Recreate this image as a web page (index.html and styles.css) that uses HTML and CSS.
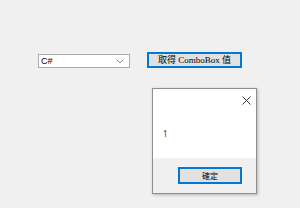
FILE: index.html
```html
<!DOCTYPE html>
<html lang="zh-Hant">
<head>
    <meta charset="UTF-8">
    <title>ComboBox</title>
    <link rel="stylesheet" href="styles.css">
</head>
<body>
    <div class="form">
        <div class="toolbar">
            <div class="combo">
                <span class="combo-text">C#</span>
                <svg class="combo-arrow" width="8" height="5" viewBox="0 0 8 5">
                    <path d="M0.5 0.5 L4 4 L7.5 0.5" fill="none" stroke="#8a8a8a" stroke-width="1"/>
                </svg>
            </div>
            <button class="button">取得 ComboBox 值</button>
        </div>
    </div>

    <div class="dialog">
        <div class="dialog-head">
            <svg class="close" width="9" height="9" viewBox="0 0 9 9">
                <path d="M0.5 0.5 L8.5 8.5 M8.5 0.5 L0.5 8.5" stroke="#333" stroke-width="1"/>
            </svg>
        </div>
        <div class="dialog-body">1</div>
        <div class="dialog-foot">
            <button class="button ok">確定</button>
        </div>
    </div>
</body>
</html>
```

FILE: styles.css
```css
* {
    margin: 0;
    padding: 0;
    box-sizing: border-box;
}

body {
    width: 300px;
    height: 208px;
    background: #f0f0f0;
    font-family: "Liberation Serif", "Noto Sans CJK TC", serif;
    font-size: 9px;
    color: #000;
    overflow: hidden;
}

.form {
    padding: 52px 0 0 38px;
}

.toolbar {
    display: flex;
    align-items: flex-end;
    gap: 17px;
}

.combo {
    width: 92px;
    height: 14px;
    background: #fff;
    border: 1px solid #ababab;
    display: flex;
    align-items: center;
    justify-content: space-between;
    padding: 0 5px 0 2px;
}

.combo-text {
    font-family: "Liberation Sans", sans-serif;
    font-size: 9px;
    line-height: 12px;
}

.button {
    width: 95px;
    height: 16px;
    background: #e1e1e1;
    border: 2px solid #0078d7;
    font-family: "Liberation Serif", "Noto Sans CJK TC", serif;
    font-size: 9px;
    line-height: 12px;
    color: #000;
}

.dialog {
    position: absolute;
    left: 152px;
    top: 88px;
    width: 105px;
    height: 106px;
    background: #fff;
    border: 1px solid #8f8f8f;
    box-shadow: 1px 1px 3px rgba(0, 0, 0, 0.25);
    display: flex;
    flex-direction: column;
    font-family: "Noto Sans", "Noto Sans CJK TC", sans-serif;
}

.dialog-head {
    height: 22px;
    display: flex;
    justify-content: flex-end;
    align-items: center;
    padding: 0 5px 0 0;
}

.dialog-body {
    flex: 1;
    padding: 17px 0 0 10px;
    font-size: 8px;
    color: #333;
}

.dialog-foot {
    height: 35px;
    background: #f0f0f0;
    display: flex;
    justify-content: flex-end;
    padding: 9px 14px 0 0;
}

.ok {
    width: 64px;
    height: 17px;
    font-family: "Noto Sans CJK TC", sans-serif;
    font-size: 8px;
}
```
